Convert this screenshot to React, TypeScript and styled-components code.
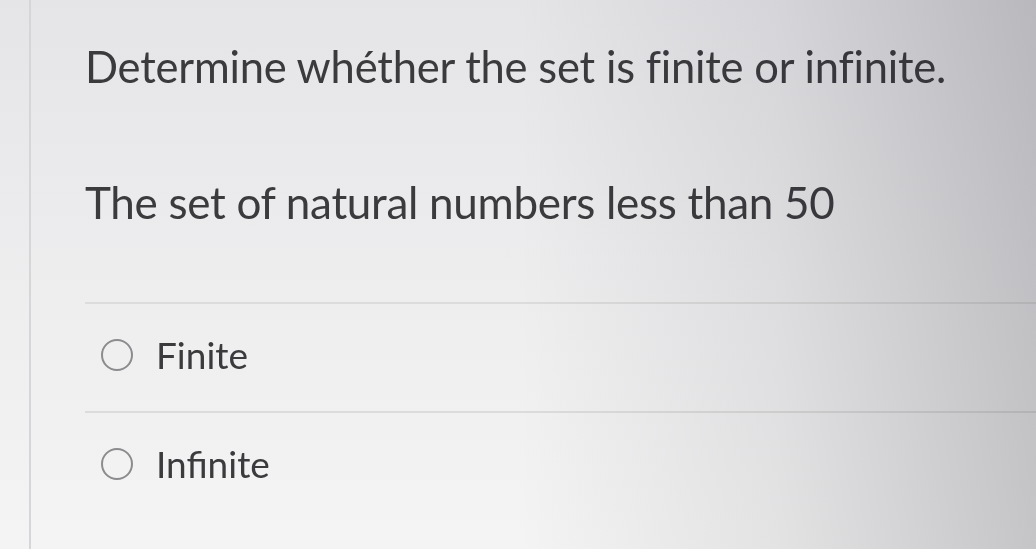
import React from 'react';
import styled, {createGlobalStyle} from 'styled-components';

const GlobalStyle = createGlobalStyle`
  html, body
  {
    margin: 0;
    padding: 0;
  }
  body
  {
    font-family: Lato, "Open Sans", "Liberation Sans", sans-serif;
    color: #3b3b3e;
  }
`

const options = ['Finite', 'Infinite'];

const App: React.FC = () =>
{
  return (
    <>
      <GlobalStyle />
      <Page>
        <Gutter />
        <Content>
          <Question>Determine whéther the set is finite or infinite.</Question>
          <Prompt>The set of natural numbers less than 50</Prompt>
          <Options>
            {options.map((label) => (
              <Option key={label}>
                <Radio />
                <Label>{label}</Label>
              </Option>
            ))}
          </Options>
        </Content>
        <Shade />
      </Page>
    </>
  );
}

const Page = styled.main`
  position: relative;
  display: flex;
  width: 1036px;
  height: 549px;
  overflow: hidden;
  background: linear-gradient(to bottom, #e5e4e7 0%, #eeeeef 55%, #f4f4f4 100%);
`

const Shade = styled.div`
  position: absolute;
  inset: 0;
  pointer-events: none;
  background:
    linear-gradient(to right, rgba(30, 28, 40, 0) 0%, rgba(30, 28, 40, 0) 50%, rgba(30, 28, 40, 0.08) 75%, rgba(30, 28, 40, 0.22) 100%);
`

const Gutter = styled.div`
  width: 29px;
  flex-shrink: 0;
  border-right: 2px solid #d6d6d8;
`

const Content = styled.section`
  flex: 1;
  display: flex;
  flex-direction: column;
  padding: 39px 0 0 54px;
`

const Question = styled.h1`
  margin: 0;
  font-size: 43.5px;
  font-weight: 400;
  line-height: 54px;
  letter-spacing: -0.2px;
  filter: blur(0.5px);
`

const Prompt = styled.p`
  margin: 82px 0 0;
  font-size: 44px;
  line-height: 54px;
  letter-spacing: -0.3px;
  filter: blur(0.5px);
`

const Options = styled.div`
  margin-top: 73px;
  display: flex;
  flex-direction: column;
`

const Option = styled.label`
  display: flex;
  align-items: center;
  gap: 23px;
  height: 109px;
  padding: 0 0 6px 16px;
  border-top: 2px solid #dcdcdc;
  box-sizing: border-box;
`

const Radio = styled.span`
  width: 28px;
  height: 28px;
  border-radius: 50%;
  border: 2px solid #8c8c8e;
  filter: blur(0.4px);
`

const Label = styled.span`
  font-size: 37px;
  line-height: 44px;
  filter: blur(0.5px);
`

export default App
